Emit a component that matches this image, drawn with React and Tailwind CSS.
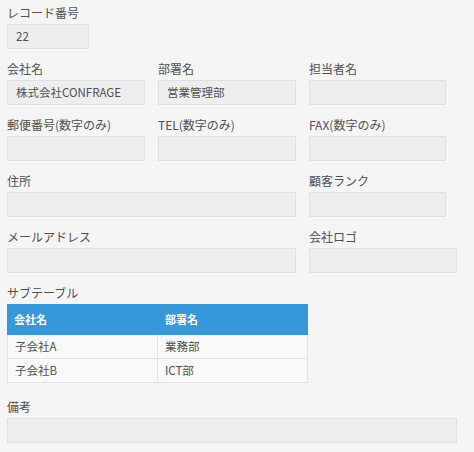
import React from "react";

const font = { fontFamily: '"Noto Sans CJK JP", "Noto Sans", sans-serif' };

function Field({ label, value, w }) {
  return (
    <div className={`flex flex-col ${w}`}>
      <div className="h-[17px] leading-[17px] text-[12px] text-[#505050] whitespace-nowrap">{label}</div>
      <div className="mt-[3px] h-[25px] bg-[#eeeeee] border border-[#e0e0e0] px-[8px] text-[11.5px] leading-[23px] text-[#505050] whitespace-nowrap">
        {value}
      </div>
    </div>
  );
}

export default function App() {
  return (
    <div style={font} className="w-[474px] h-[452px] bg-[#f5f5f5] pl-[7px] pt-[4px] flex flex-col gap-[11px] overflow-hidden">
      <div className="flex gap-[13px]">
        <Field label="レコード番号" value="22" w="w-[82px]" />
      </div>
      <div className="flex gap-[13px]">
        <Field label="会社名" value="株式会社CONFRAGE" w="w-[138px]" />
        <Field label="部署名" value="営業管理部" w="w-[138px]" />
        <Field label="担当者名" value="" w="w-[137px]" />
      </div>
      <div className="flex gap-[13px]">
        <Field label="郵便番号(数字のみ)" value="" w="w-[138px]" />
        <Field label="TEL(数字のみ)" value="" w="w-[138px]" />
        <Field label="FAX(数字のみ)" value="" w="w-[137px]" />
      </div>
      <div className="flex gap-[13px]">
        <Field label="住所" value="" w="w-[289px]" />
        <Field label="顧客ランク" value="" w="w-[137px]" />
      </div>
      <div className="flex gap-[13px]">
        <Field label="メールアドレス" value="" w="w-[289px]" />
        <Field label="会社ロゴ" value="" w="w-[148px]" />
      </div>
      <div className="flex flex-col">
        <div className="h-[17px] leading-[17px] text-[12px] text-[#505050]">サブテーブル</div>
        <div className="mt-[3px] w-[301px] flex flex-col text-[11.5px] text-[#505050]">
          <div className="flex h-[31px] bg-[#3498db] text-white font-bold text-[11px] leading-[31px]">
            <div className="w-[151px] px-[7px]">会社名</div>
            <div className="flex-1 px-[7px]">部署名</div>
          </div>
          <div className="flex h-[24px] bg-[#f9f9f9] border-x border-b border-[#e3e3e3] leading-[23px]">
            <div className="w-[150px] px-[7px] border-r border-[#e3e3e3]">子会社A</div>
            <div className="flex-1 px-[7px]">業務部</div>
          </div>
          <div className="flex h-[24px] bg-[#f9f9f9] border-x border-b border-[#e3e3e3] leading-[23px]">
            <div className="w-[150px] px-[7px] border-r border-[#e3e3e3]">子会社B</div>
            <div className="flex-1 px-[7px]">ICT部</div>
          </div>
        </div>
      </div>
      <div className="flex gap-[13px] mt-[4px]">
        <Field label="備考" value="" w="w-[450px]" />
      </div>
    </div>
  );
}
